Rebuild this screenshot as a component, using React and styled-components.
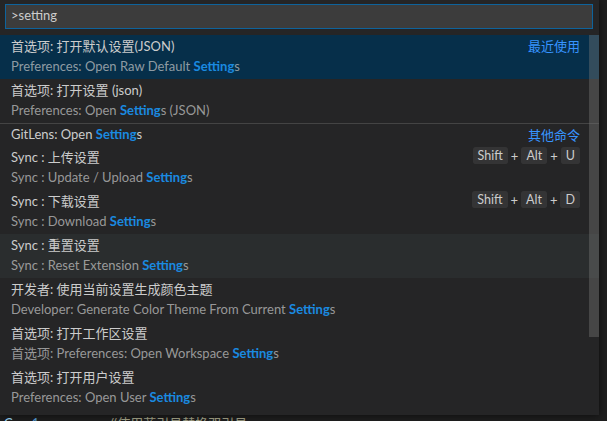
import styled, { createGlobalStyle, css } from 'styled-components';

const GlobalStyle = createGlobalStyle`
  html, body {
    margin: 0;
    padding: 0;
    background: #1e1e1e;
    overflow: hidden;
  }
  * {
    box-sizing: border-box;
  }
`;

const items = [
  {
    label: ['首选项: 打开默认设置(JSON)'],
    detail: ['Preferences: Open Raw Default ', 'Setting', 's'],
    tag: '最近使用',
    selected: true,
  },
  {
    label: ['首选项: 打开设置 (json)'],
    detail: ['Preferences: Open ', 'Setting', 's (JSON)'],
  },
  {
    label: ['GitLens: Open ', 'Setting', 's'],
    tag: '其他命令',
    separator: true,
  },
  {
    label: ['Sync : 上传设置'],
    detail: ['Sync : Update / Upload ', 'Setting', 's'],
    keys: ['Shift', 'Alt', 'U'],
  },
  {
    label: ['Sync : 下载设置'],
    detail: ['Sync : Download ', 'Setting', 's'],
    keys: ['Shift', 'Alt', 'D'],
  },
  {
    label: ['Sync : 重置设置'],
    detail: ['Sync : Reset Extension ', 'Setting', 's'],
    hovered: true,
  },
  {
    label: ['开发者: 使用当前设置生成颜色主题'],
    detail: ['Developer: Generate Color Theme From Current ', 'Setting', 's'],
  },
  {
    label: ['首选项: 打开工作区设置'],
    detail: ['首选项: Preferences: Open Workspace ', 'Setting', 's'],
  },
  {
    label: ['首选项: 打开用户设置'],
    detail: ['Preferences: Open User ', 'Setting', 's'],
  },
];

const Highlighted = ({ parts }) =>
  parts.map((part, i) => (i === 1 ? <Match key={i}>{part}</Match> : <span key={i}>{part}</span>));

const App = () => (
  <>
    <GlobalStyle />
    <Screen>
      <QuickPick>
        <Header>
          <SearchInput>&gt;setting</SearchInput>
        </Header>
        <List>
          {items.map((item, i) => (
            <Row key={i} $selected={item.selected} $hovered={item.hovered} $separator={item.separator}>
              <LabelLine>
                <Label>
                  <Highlighted parts={item.label} />
                </Label>
                {item.tag && <Tag>{item.tag}</Tag>}
                {item.keys && (
                  <Keys>
                    {item.keys.map((k, j) => (
                      <span key={k}>
                        {j > 0 && <Plus>+</Plus>}
                        <Key>{k}</Key>
                      </span>
                    ))}
                  </Keys>
                )}
              </LabelLine>
              {item.detail && (
                <Detail>
                  <Highlighted parts={item.detail} />
                </Detail>
              )}
            </Row>
          ))}
        </List>
        <Scrollbar />
      </QuickPick>
      <EditorPeek>
        <CodeLine>
          <span className='kw'>C</span> <span className='fn'>&nbsp;cc1 ...</span>
          <span className='cm'>&nbsp;&nbsp;//使用蓝引号替换双引号</span>
        </CodeLine>
      </EditorPeek>
    </Screen>
  </>
);

export default App;

const Screen = styled.div`
  width: 607px;
  height: 421px;
  overflow: hidden;
  position: relative;
  background: #1e1e1e;
  font-family: Lato, 'Noto Sans CJK SC', sans-serif;
`;

const QuickPick = styled.div`
  position: relative;
  width: 599px;
  height: 415px;
  background: #252526;
  box-shadow: 0 0 8px rgba(0, 0, 0, 0.6);
  display: flex;
  flex-direction: column;
  padding-bottom: 5px;
  z-index: 1;
`;

const Header = styled.div`
  padding: 4px 6px 6px 5px;
`;

const SearchInput = styled.div`
  height: 25px;
  background: #3c3c3c;
  border: 1px solid #0e639c;
  color: #cccccc;
  font-size: 13px;
  line-height: 21px;
  padding: 0 5px;
`;

const List = styled.div`
  display: flex;
  flex-direction: column;
  overflow: hidden;
`;

const Row = styled.div`
  display: flex;
  flex-direction: column;
  padding: 0 19px 0 11px;
  color: #cccccc;
  ${(p) =>
    p.$selected &&
    css`
      background: #062f4a;
    `}
  ${(p) =>
    p.$hovered &&
    css`
      background: #2a2d2e;
    `}
  ${(p) =>
    p.$separator &&
    css`
      border-top: 1px solid #444444;
    `}
`;

const LabelLine = styled.div`
  display: flex;
  align-items: center;
  height: 22px;
  padding-bottom: 2px;
`;

const Label = styled.div`
  flex: 1;
  font-size: 13px;
  white-space: nowrap;
`;

const Detail = styled.div`
  height: 22px;
  line-height: 18px;
  font-size: 13px;
  color: rgba(204, 204, 204, 0.7);
  white-space: nowrap;
`;

const Match = styled.span`
  color: #1a8ae0;
  font-weight: 700;
`;

const Tag = styled.div`
  font-size: 13px;
  color: #3794ff;
`;

const Keys = styled.div`
  display: flex;
  align-items: center;
  color: #cccccc;

  > span {
    display: flex;
    align-items: center;
  }
`;

const Key = styled.span`
  display: inline-block;
  min-width: 19px;
  height: 18px;
  line-height: 17px;
  padding: 0 5px;
  text-align: center;
  border-radius: 3px;
  background: rgba(128, 128, 128, 0.17);
  border-bottom: 1px solid rgba(34, 34, 34, 0.8);
  font-size: 12.5px;
`;

const Plus = styled.span`
  margin: 0 3px;
  font-size: 13px;
`;

const Scrollbar = styled.div`
  position: absolute;
  right: 0;
  top: 35px;
  width: 10px;
  height: 302px;
  background: rgba(121, 121, 121, 0.4);
`;

const EditorPeek = styled.div`
  height: 6px;
  overflow: hidden;
`;

const CodeLine = styled.div`
  margin-top: -1px;
  padding-left: 4px;
  font-size: 13px;
  line-height: 18px;
  white-space: nowrap;
  color: #d4d4d4;

  .kw {
    color: #9cdcfe;
  }
  .fn {
    color: #569cd6;
  }
  .cm {
    color: #a6a68a;
    margin-left: 50px;
  }
`;
